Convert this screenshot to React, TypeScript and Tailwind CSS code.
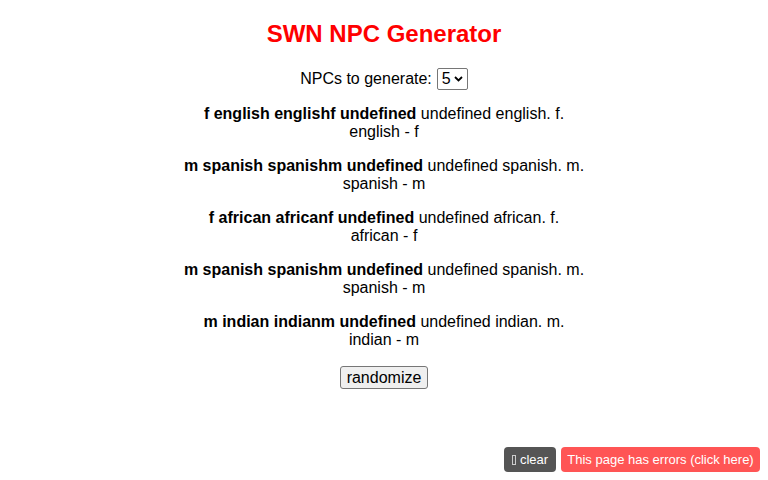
import { useState } from 'react';

interface Npc {
    gender: string;
    culture: string;
}

const npcs: Npc[] = [
    { gender: 'f', culture: 'english' },
    { gender: 'm', culture: 'spanish' },
    { gender: 'f', culture: 'african' },
    { gender: 'm', culture: 'spanish' },
    { gender: 'm', culture: 'indian' },
];

export default function App() {
    const [count, setCount] = useState('5');

    return (
        <div className="min-h-[480px] bg-white text-black text-center font-['Liberation_Sans',Arial,sans-serif] text-base pt-[20px]">
            <h1 className="text-2xl leading-7 font-bold text-[#f00]">SWN NPC Generator</h1>

            <div className="mt-[20px] flex justify-center items-center h-[22px] leading-[18px]">
                <span>NPCs to generate:</span>
                <div className="relative ml-[5px]">
                    <select
                        value={count}
                        onChange={(e) => setCount(e.target.value)}
                        className="appearance-none w-[31px] h-[22px] border border-[#767676] rounded-[2px] bg-white pl-[4px] pr-0 text-base leading-[18px] text-left"
                    >
                        {['1', '2', '3', '4', '5', '6', '7', '8', '9'].map(n => (
                            <option key={n} value={n}>{n}</option>
                        ))}
                    </select>
                    {/* native-looking chevron */}
                    <svg className="absolute right-[5px] top-[8px] pointer-events-none" width="9" height="6" viewBox="0 0 9 6">
                        <path d="M1 1l3.5 3.5L8 1" fill="none" stroke="#000" strokeWidth="1.8" />
                    </svg>
                </div>
            </div>

            <div className="mt-[15px] flex flex-col gap-4 leading-[18px]">
                {npcs.map((npc, i) => (
                    <p key={i}>
                        <b>{npc.gender} {npc.culture} {npc.culture}{npc.gender} undefined</b> undefined {npc.culture}. {npc.gender}.
                        <br />
                        {npc.culture} - {npc.gender}
                    </p>
                ))}
            </div>

            <button className="mt-[17px] h-[23px] px-[6px] border border-[#767676] rounded-[3px] bg-[#efefef] text-base leading-[18px]">
                randomize
            </button>

            <div className="fixed right-[8px] bottom-[8px] flex gap-[5px] text-[13px] leading-[15px] text-white">
                <button className="h-[25px] w-[52px] justify-center rounded-[4px] bg-[#555] flex items-center gap-[4px]">
                    <span className="inline-block w-[4px] h-[10px] border border-[#ccc]"></span>
                    clear
                </button>
                <button className="h-[25px] w-[199px] rounded-[4px] bg-[#ff5555]">
                    This page has errors (click here)
                </button>
            </div>
        </div>
    );
}
